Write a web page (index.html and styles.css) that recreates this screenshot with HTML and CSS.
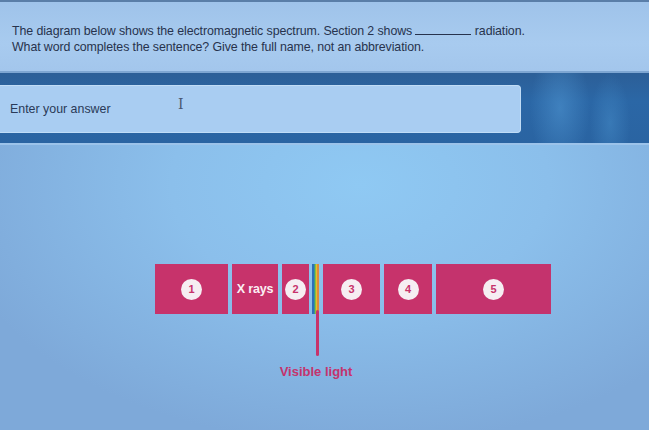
FILE: index.html
```html
<!DOCTYPE html>
<html>
<head>
<meta charset="utf-8">
<link rel="stylesheet" href="styles.css">
</head>
<body>
<div class="question">
  <p class="line">The diagram below shows the electromagnetic spectrum. Section 2 shows <span class="blank"></span> radiation.</p>
  <p class="line">What word completes the sentence? Give the full name, not an abbreviation.</p>
</div>
<div class="band">
  <div class="answer">
    <span class="placeholder">Enter your answer</span>
    <span class="ibeam">I</span>
  </div>
</div>
<div class="stage">
  <div class="spectrum">
    <div class="cell c1"><span class="num">1</span></div>
    <div class="cell c2"><span class="lbl">X rays</span></div>
    <div class="cell c3"><span class="num">2</span></div>
    <div class="strip">
      <div class="pointer">
        <div class="stem"></div>
        <div class="caption">Visible light</div>
      </div>
    </div>
    <div class="cell c4"><span class="num">3</span></div>
    <div class="cell c5"><span class="num">4</span></div>
    <div class="cell c6"><span class="num">5</span></div>
  </div>
</div>
</body>
</html>
```
FILE: styles.css
```css
html, body {
  margin: 0;
  padding: 0;
  width: 649px;
  height: 430px;
  overflow: hidden;
  font-family: "Liberation Sans", Arial, sans-serif;
}
body {
  display: flex;
  flex-direction: column;
  background: #86b8e6;
}
.question {
  height: 73px;
  box-sizing: border-box;
  padding: 21px 0 0 12px;
  background: linear-gradient(180deg, #9fc3ea 0%, #a8cbef 60%, #a3c6ec 100%);
  border-top: 2px solid #5a7ea8;
  border-bottom: 2px solid #7ea6d2;
}
.line {
  margin: 0;
  font-size: 12.4px;
  line-height: 16px;
  color: #27334d;
  letter-spacing: -0.1px;
}
.blank {
  display: inline-block;
  width: 56px;
  border-bottom: 1px solid #27334d;
  vertical-align: baseline;
}
.band {
  height: 72px;
  box-sizing: border-box;
  padding-top: 12px;
  background:
    radial-gradient(ellipse 30px 60px at 560px 35px, rgba(80,150,210,0.55), transparent),
    radial-gradient(ellipse 20px 50px at 610px 50px, rgba(70,140,200,0.5), transparent),
    linear-gradient(180deg, #2c5f98 0%, #2b67a6 40%, #2a64a2 100%);
  border-bottom: 2px solid #9cc3ea;
}
.answer {
  width: 521px;
  height: 48px;
  box-sizing: border-box;
  background: #a9cdf2;
  border: 1px solid #c0dcf6;
  border-left: none;
  border-radius: 0 4px 4px 0;
  display: flex;
  align-items: center;
  padding-left: 10px;
}
.placeholder {
  font-size: 12.4px;
  color: #2a3a58;
  width: 168px;
}
.ibeam {
  font-family: "DejaVu Serif", serif;
  font-size: 14px;
  color: #4a5670;
  margin-top: -10px;
}
.stage {
  flex: 1;
  background: radial-gradient(ellipse 420px 260px at 360px 40px, #8fc9f3 0%, #8bbfeb 45%, #7ea9d9 100%);
  padding-top: 119px;
  box-sizing: border-box;
}
.spectrum {
  display: flex;
  margin-left: 155px;
  height: 50px;
  gap: 4px;
}
.cell {
  background: #c7336b;
  display: flex;
  align-items: center;
  justify-content: center;
  height: 50px;
}
.c1 { width: 73px; }
.c2 { width: 46px; }
.c3 { width: 27px; }
.c4 { width: 57px; }
.c5 { width: 48px; }
.c6 { width: 115px; background: #c4336d; }
.num {
  width: 21px;
  height: 21px;
  border-radius: 50%;
  background: #f6eef2;
  color: #c7336b;
  font-weight: bold;
  font-size: 11px;
  display: flex;
  align-items: center;
  justify-content: center;
}
.lbl {
  color: #fbeef3;
  font-weight: bold;
  font-size: 12.5px;
  letter-spacing: -0.2px;
  white-space: nowrap;
}
.strip {
  width: 7px;
  height: 50px;
  margin-left: -1px;
  position: relative;
  background: linear-gradient(90deg, #2f6fb8 0 2px, #3a9a8a 2px 3px, #8cbb3c 3px 4px, #e3be2e 4px 5px, #e08a3a 5px 7px);
}
.pointer {
  position: absolute;
  top: 46px;
  left: 4px;
  width: 2px;
}
.stem {
  width: 3px;
  height: 46px;
  background: #c7336b;
  border-radius: 2px;
}
.caption {
  position: absolute;
  top: 54px;
  left: -42px;
  width: 84px;
  text-align: center;
  font-size: 13px;
  font-weight: bold;
  color: #c4336d;
  white-space: nowrap;
}
```
